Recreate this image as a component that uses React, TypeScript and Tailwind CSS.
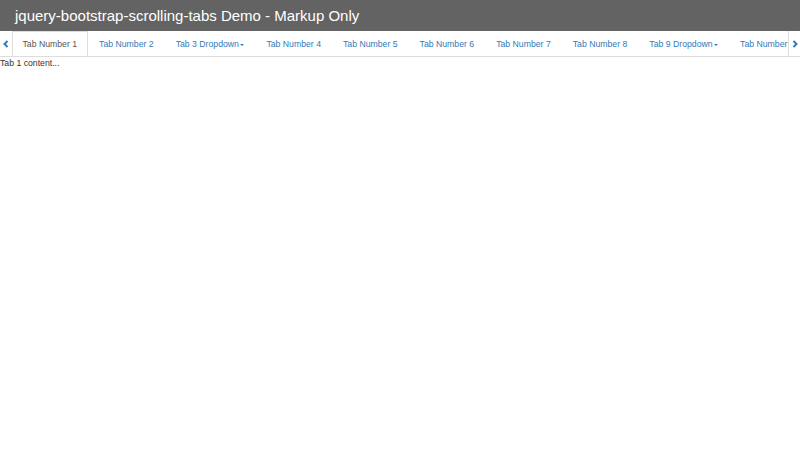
import React from "react";

const tabs = [
  { label: "Tab Number 1", active: true },
  { label: "Tab Number 2" },
  { label: "Tab 3 Dropdown", dropdown: true },
  { label: "Tab Number 4" },
  { label: "Tab Number 5" },
  { label: "Tab Number 6" },
  { label: "Tab Number 7" },
  { label: "Tab Number 8" },
  { label: "Tab 9 Dropdown", dropdown: true },
  { label: "Tab Number 10" },
  { label: "Tab Number 11" },
];

function Chevron({ dir }: { dir: "left" | "right" }) {
  return (
    <svg width="6" height="8" viewBox="0 0 6 8">
      {dir === "left" ? (
        <polyline points="4.5,1 1.5,4 4.5,7" fill="none" stroke="#337ab7" strokeWidth="2" />
      ) : (
        <polyline points="1.5,1 4.5,4 1.5,7" fill="none" stroke="#337ab7" strokeWidth="2" />
      )}
    </svg>
  );
}

export default function App() {
  return (
    <div className="w-[800px] h-[450px] bg-white overflow-hidden" style={{ fontFamily: '"Liberation Sans", Arial, sans-serif' }}>
      <div className="h-[31px] bg-[#636363] flex items-center pl-[15px]">
        <span className="text-white text-[15px] leading-none">jquery-bootstrap-scrolling-tabs Demo - Markup Only</span>
      </div>
      <div className="flex h-[26px] border-b border-[#ddd]">
        <div className="w-[12px] shrink-0 flex items-center justify-center">
          <Chevron dir="left" />
        </div>
        <div className="flex-1 overflow-hidden">
          <ul className="flex h-full whitespace-nowrap">
            {tabs.map((t, i) => (
              <li
                key={i}
                className={
                  "shrink-0 mr-[1px] h-[26px] px-[9.5px] flex items-center text-[8.7px] border border-b-0 " +
                  (t.active
                    ? "bg-white border-[#ddd] text-[#555]"
                    : "border-transparent text-[#337ab7]")
                }
              >
                <span>{t.label}</span>
                {t.dropdown && (
                  <span className="ml-[1.5px] inline-block w-0 h-0 border-l-[2.5px] border-r-[2.5px] border-t-[2.5px] border-l-transparent border-r-transparent border-t-[#337ab7] mt-[1px]" />
                )}
              </li>
            ))}
          </ul>
        </div>
        <div className="w-[12px] shrink-0 flex items-center justify-center border-l border-[#ddd]">
          <Chevron dir="right" />
        </div>
      </div>
      <div className="text-[8.7px] leading-[12px] text-[#333]">Tab 1 content...</div>
    </div>
  );
}
